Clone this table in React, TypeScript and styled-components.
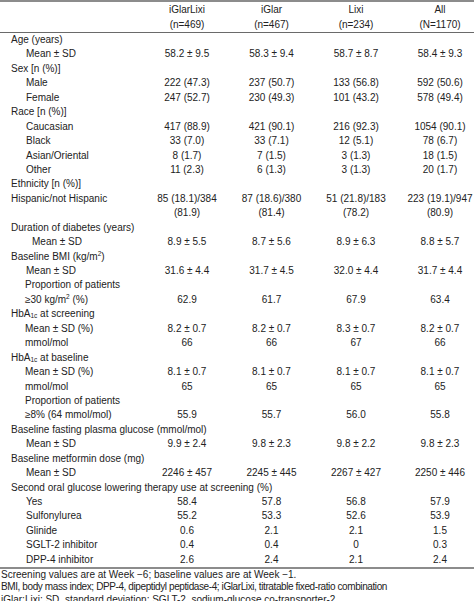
import React from 'react';
import styled, { createGlobalStyle } from 'styled-components';

const GlobalStyle = createGlobalStyle`
	html, body {
		margin: 0;
		padding: 0;
		background: #fff;
		overflow: hidden;
	}
	body {
		font-family: 'Liberation Sans', Arial, sans-serif;
		color: #222;
	}
`;

const Page = styled.div`
	width: 482px;
	font-size: 10px;
`;

const Table = styled.div`
	display: grid;
	grid-template-columns: 145px 84px 85px 84px 84px;
	border-top: 2px solid #8c8c8c;
	border-bottom: 2px solid #8c8c8c;
`;

const HeadRow = styled.div`
	display: contents;
`;

const HeadCell = styled.div`
	text-align: center;
	line-height: 15px;
	white-space: nowrap;
	border-bottom: ${(props: { last?: boolean }) =>
		props.last ? '1px solid #6a6a6a' : 'none'};
`;

const Label = styled.div`
	padding-left: ${(props: { indent: number }) => props.indent}px;
	line-height: 14.43px;
	white-space: nowrap;
	position: relative;
	z-index: 1;
`;

const Cell = styled.div`
	text-align: center;
	line-height: 14.43px;
	white-space: nowrap;
`;

const Sub = styled.sub`
	font-size: 6.5px;
	vertical-align: -1px;
	line-height: 0;
`;

const Sup = styled.sup`
	font-size: 6.5px;
	vertical-align: 4px;
	line-height: 0;
`;

const Notes = styled.div`
	font-size: 10px;
	line-height: 12.3px;
	padding-left: 1px;
	white-space: nowrap;
`;

const Note = styled.div`
	letter-spacing: ${(props: { tight?: boolean }) => (props.tight ? '-0.4px' : '0')};
`;

type Row = { label: React.ReactNode; indent: number; values?: string[] };

const HbA = () => (
	<>
		HbA<Sub>1c</Sub>
	</>
);

const rows: Row[] = [
	{ label: 'Age (years)', indent: 11 },
	{ label: 'Mean ± SD', indent: 26, values: ['58.2 ± 9.5', '58.3 ± 9.4', '58.7 ± 8.7', '58.4 ± 9.3'] },
	{ label: 'Sex [n (%)]', indent: 11 },
	{ label: 'Male', indent: 26, values: ['222 (47.3)', '237 (50.7)', '133 (56.8)', '592 (50.6)'] },
	{ label: 'Female', indent: 26, values: ['247 (52.7)', '230 (49.3)', '101 (43.2)', '578 (49.4)'] },
	{ label: 'Race [n (%)]', indent: 11 },
	{ label: 'Caucasian', indent: 26, values: ['417 (88.9)', '421 (90.1)', '216 (92.3)', '1054 (90.1)'] },
	{ label: 'Black', indent: 26, values: ['33 (7.0)', '33 (7.1)', '12 (5.1)', '78 (6.7)'] },
	{ label: 'Asian/Oriental', indent: 26, values: ['8 (1.7)', '7 (1.5)', '3 (1.3)', '18 (1.5)'] },
	{ label: 'Other', indent: 26, values: ['11 (2.3)', '6 (1.3)', '3 (1.3)', '20 (1.7)'] },
	{ label: 'Ethnicity [n (%)]', indent: 11 },
	{ label: 'Hispanic/not Hispanic', indent: 11, values: ['85 (18.1)/384', '87 (18.6)/380', '51 (21.8)/183', '223 (19.1)/947'] },
	{ label: '', indent: 11, values: ['(81.9)', '(81.4)', '(78.2)', '(80.9)'] },
	{ label: 'Duration of diabetes (years)', indent: 11 },
	{ label: 'Mean ± SD', indent: 32, values: ['8.9 ± 5.5', '8.7 ± 5.6', '8.9 ± 6.3', '8.8 ± 5.7'] },
	{ label: <>Baseline BMI (kg/m<Sup>2</Sup>)</>, indent: 11 },
	{ label: 'Mean ± SD', indent: 26, values: ['31.6 ± 4.4', '31.7 ± 4.5', '32.0 ± 4.4', '31.7 ± 4.4'] },
	{ label: 'Proportion of patients', indent: 25 },
	{ label: <>≥30 kg/m<Sup>2</Sup> (%)</>, indent: 25, values: ['62.9', '61.7', '67.9', '63.4'] },
	{ label: <><HbA /> at screening</>, indent: 11 },
	{ label: 'Mean ± SD (%)', indent: 25, values: ['8.2 ± 0.7', '8.2 ± 0.7', '8.3 ± 0.7', '8.2 ± 0.7'] },
	{ label: 'mmol/mol', indent: 25, values: ['66', '66', '67', '66'] },
	{ label: <><HbA /> at baseline</>, indent: 11 },
	{ label: 'Mean ± SD (%)', indent: 25, values: ['8.1 ± 0.7', '8.1 ± 0.7', '8.1 ± 0.7', '8.1 ± 0.7'] },
	{ label: 'mmol/mol', indent: 25, values: ['65', '65', '65', '65'] },
	{ label: 'Proportion of patients', indent: 25 },
	{ label: '≥8% (64 mmol/mol)', indent: 25, values: ['55.9', '55.7', '56.0', '55.8'] },
	{ label: 'Baseline fasting plasma glucose (mmol/mol)', indent: 11 },
	{ label: 'Mean ± SD', indent: 26, values: ['9.9 ± 2.4', '9.8 ± 2.3', '9.8 ± 2.2', '9.8 ± 2.3'] },
	{ label: 'Baseline metformin dose (mg)', indent: 11 },
	{ label: 'Mean ± SD', indent: 26, values: ['2246 ± 457', '2245 ± 445', '2267 ± 427', '2250 ± 446'] },
	{ label: 'Second oral glucose lowering therapy use at screening (%)', indent: 11 },
	{ label: 'Yes', indent: 26, values: ['58.4', '57.8', '56.8', '57.9'] },
	{ label: 'Sulfonylurea', indent: 26, values: ['55.2', '53.3', '52.6', '53.9'] },
	{ label: 'Glinide', indent: 26, values: ['0.6', '2.1', '2.1', '1.5'] },
	{ label: 'SGLT-2 inhibitor', indent: 26, values: ['0.4', '0.4', '0', '0.3'] },
	{ label: 'DPP-4 inhibitor', indent: 26, values: ['2.6', '2.4', '2.1', '2.4'] },
];

const heads = [
	['iGlarLixi', '(n=469)'],
	['iGlar', '(n=467)'],
	['Lixi', '(n=234)'],
	['All', '(N=1170)'],
];

export default function App(): JSX.Element {
	return (
		<>
			<GlobalStyle />
			<Page>
				<Table>
					<HeadRow>
						<HeadCell />
						{heads.map((h) => (
							<HeadCell key={h[0]}>{h[0]}</HeadCell>
						))}
					</HeadRow>
					<HeadRow>
						<HeadCell last />
						{heads.map((h) => (
							<HeadCell key={h[1]} last>
								{h[1]}
							</HeadCell>
						))}
					</HeadRow>
					{rows.map((r, i) => (
						<React.Fragment key={i}>
							<Label indent={r.indent}>{r.label}</Label>
							{(r.values || ['', '', '', '']).map((v, j) => (
								<Cell key={j}>{v}</Cell>
							))}
						</React.Fragment>
					))}
				</Table>
				<Notes>
					<Note>Screening values are at Week −6; baseline values are at Week −1.</Note>
					<Note tight>
						BMI, body mass index; DPP-4, dipeptidyl peptidase-4; iGlarLixi, titratable fixed-ratio combination
					</Note>
					<Note>iGlar:Lixi; SD, standard deviation; SGLT-2, sodium-glucose co-transporter-2.</Note>
				</Notes>
			</Page>
		</>
	);
}
